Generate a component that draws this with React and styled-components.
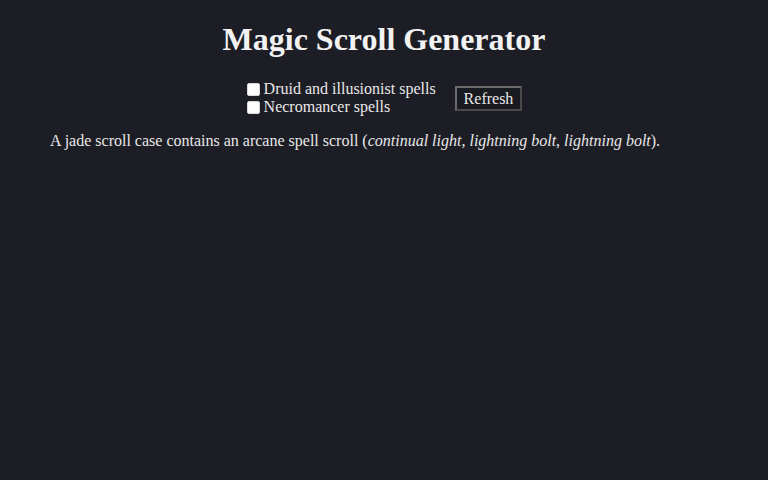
import React, { useState } from "react";
import styled, { createGlobalStyle } from "styled-components";

const GlobalStyle = createGlobalStyle`
  html, body {
    margin: 0;
    padding: 0;
    background: #1d1e25;
    color: #e8e8e8;
    font-family: "Liberation Serif", "Times New Roman", serif;
    font-size: 16px;
  }
`;

const Page = styled.main`
  min-height: 480px;
  padding: 0 50px;
  box-sizing: border-box;
`;

const Title = styled.h1`
  margin: 21px 0 22px;
  font-size: 32px;
  font-weight: bold;
  text-align: center;
  color: #f2f2f2;
  line-height: 37px;
`;

const Controls = styled.form`
  display: flex;
  justify-content: center;
  align-items: center;
  gap: 19px;
  margin: 0;
  padding-left: 1px;
`;

const Options = styled.div`
  display: flex;
  flex-direction: column;
`;

const Option = styled.label`
  display: flex;
  align-items: center;
  line-height: 18px;
  height: 18px;
`;

const Box = styled.input.attrs({ type: "checkbox" })`
  appearance: none;
  width: 13px;
  height: 13px;
  margin: 0 4px 0 0;
  background: #fdfdfd;
  border: 1px solid #d8d8d8;
  border-radius: 2px;
  box-sizing: border-box;
`;

const Button = styled.button`
  font-family: inherit;
  font-size: 16px;
  color: #e8e8e8;
  background: #1a1b21;
  border: 2px solid #6b6b6b;
  border-right-color: #4a4a4a;
  border-bottom-color: #4a4a4a;
  padding: 1px 7px;
  height: 25px;
  line-height: 19px;
`;

const Result = styled.p`
  margin: 16px 0 0;
  line-height: 18px;
`;

export default function App() {
  const [druid, setDruid] = useState(false);
  const [necro, setNecro] = useState(false);
  return (
    <>
      <GlobalStyle />
      <Page>
        <Title>Magic Scroll Generator</Title>
        <Controls onSubmit={(e) => e.preventDefault()}>
          <Options>
            <Option>
              <Box checked={druid} onChange={() => setDruid(!druid)} />
              Druid and illusionist spells
            </Option>
            <Option>
              <Box checked={necro} onChange={() => setNecro(!necro)} />
              Necromancer spells
            </Option>
          </Options>
          <Button type="button">Refresh</Button>
        </Controls>
        <Result>
          A jade scroll case contains an arcane spell scroll (
          <i>continual light</i>, <i>lightning bolt</i>, <i>lightning bolt</i>).
        </Result>
      </Page>
    </>
  );
}
